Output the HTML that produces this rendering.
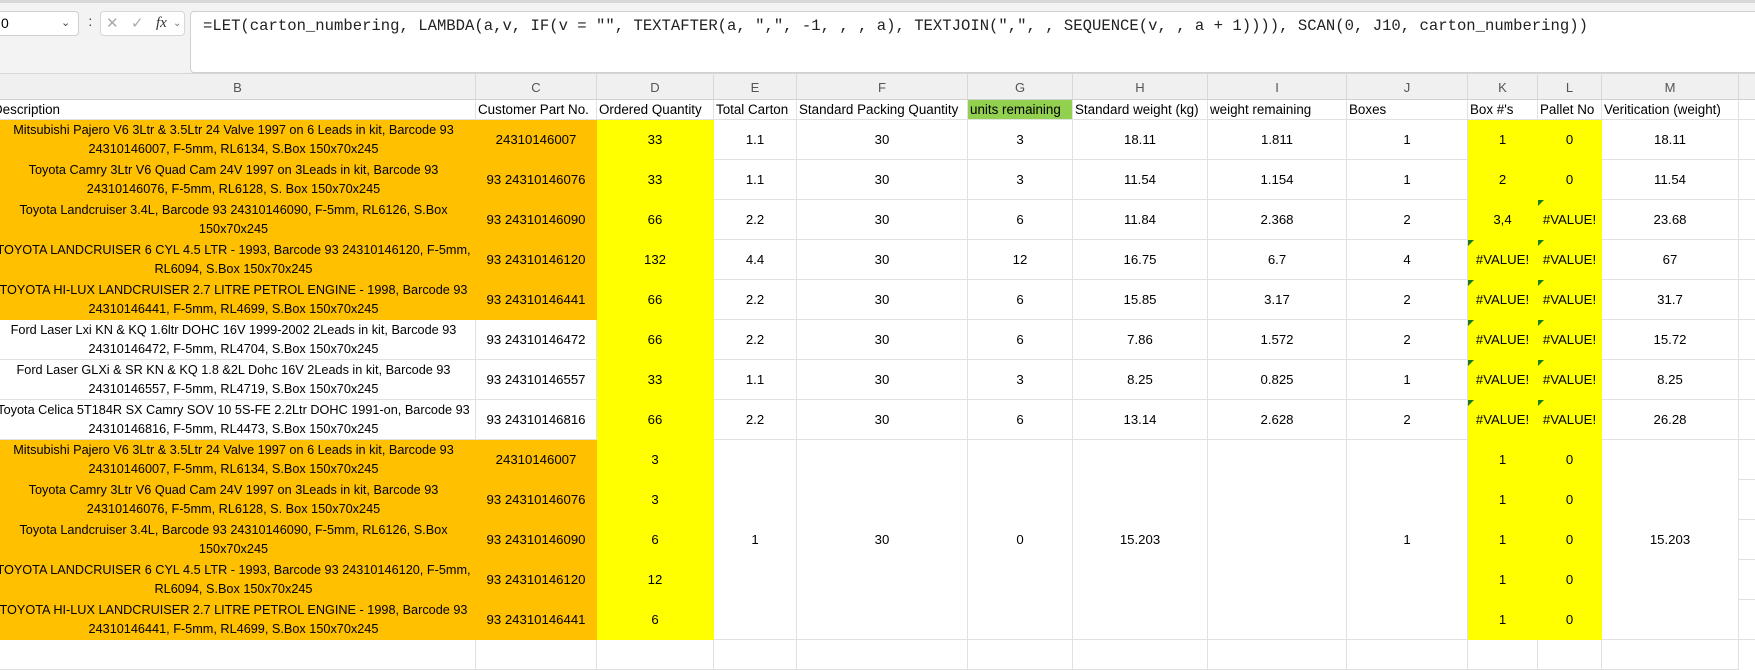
<!DOCTYPE html>
<html><head><meta charset="utf-8"><style>
*{box-sizing:border-box;margin:0;padding:0}
body{width:1755px;height:654px;overflow:hidden;background:#fff;font-family:"Liberation Sans",sans-serif;position:relative}
.top{position:absolute;left:0;top:0;width:1755px;height:73px;background:#f3f3f3;border-top:3px solid #d8d8d8}
.nb{position:absolute;left:-6px;top:8px;width:85px;height:25px;background:#fff;border:1px solid #cfcfcf;border-radius:4px;font-size:14px;line-height:23px;padding-left:6px}
.fxb{position:absolute;left:100px;top:8px;width:85px;height:25px;background:#fff;border:1px solid #d6d6d6;border-radius:4px;color:#aaa;font-size:15px;line-height:23px}
.fb{position:absolute;left:190px;top:8px;width:1580px;height:62px;background:#fff;border:1px solid #d0d0d0;border-radius:4px;font-family:"Liberation Mono",monospace;font-size:15.6px;padding:5px 0 0 12px;color:#222;white-space:pre}
.ch{position:absolute;top:73px;height:27px;background:#f0f0f0;border-bottom:1px solid #d0d0d0;border-top:1px solid #d6d6d6;border-right:1px solid #d8d8d8;color:#555;font-size:13px;text-align:center;line-height:27px}
.c{position:absolute;border-right:1px solid #e1e1e1;border-bottom:1px solid #e1e1e1;font-size:13.2px;color:#000;display:flex;align-items:center;justify-content:center;text-align:center;line-height:19px;white-space:nowrap;overflow:hidden}
.d{font-size:12.7px}
.h{justify-content:flex-start;padding-left:2px;font-size:13.4px}
.o{background:#ffc000;border-color:#ffc000}
.y{background:#ffff00;border-color:#ffff00}
.g{background:#92d050}
.t::before{content:"";position:absolute;left:0;top:0;border-top:6px solid #1a7d1a;border-right:6px solid transparent}
</style></head><body>
<div class="top">
<div class="nb">0<span style="position:absolute;left:66px;top:0;font-size:11px;color:#444">&#8964;</span></div>
<div style="position:absolute;left:88px;top:12px;width:3px;font-size:14px;color:#444;line-height:6px">·<br>·</div>
<div class="fxb"><span style="position:absolute;left:5px">✕</span><span style="position:absolute;left:30px">✓</span><span style="position:absolute;left:55px;color:#333;font-family:'Liberation Serif',serif;font-style:italic">fx</span><span style="position:absolute;left:72px;font-size:10px;color:#777">&#8964;</span></div>
<div class="fb">=LET(carton_numbering, LAMBDA(a,v, IF(v = "", TEXTAFTER(a, ",", -1, , , a), TEXTJOIN(",", , SEQUENCE(v, , a + 1)))), SCAN(0, J10, carton_numbering))</div>
</div>
<div class="ch" style="left:0;width:476px">B</div>
<div class="ch" style="left:476px;width:121px">C</div>
<div class="ch" style="left:597px;width:117px">D</div>
<div class="ch" style="left:714px;width:83px">E</div>
<div class="ch" style="left:797px;width:171px">F</div>
<div class="ch" style="left:968px;width:105px">G</div>
<div class="ch" style="left:1073px;width:135px">H</div>
<div class="ch" style="left:1208px;width:139px">I</div>
<div class="ch" style="left:1347px;width:121px">J</div>
<div class="ch" style="left:1468px;width:70px">K</div>
<div class="ch" style="left:1538px;width:64px">L</div>
<div class="ch" style="left:1602px;width:137px">M</div>
<div class="ch" style="left:1739px;width:30px"></div>

<div class="c h" style="left:-9px;top:100px;width:485px;height:20px">Description</div>
<div class="c h" style="left:476px;top:100px;width:121px;height:20px">Customer Part No.</div>
<div class="c h" style="left:597px;top:100px;width:117px;height:20px">Ordered Quantity</div>
<div class="c h" style="left:714px;top:100px;width:83px;height:20px">Total Carton</div>
<div class="c h" style="left:797px;top:100px;width:171px;height:20px">Standard Packing Quantity</div>
<div class="c h g" style="left:968px;top:100px;width:105px;height:20px">units remaining</div>
<div class="c h" style="left:1073px;top:100px;width:135px;height:20px">Standard weight (kg)</div>
<div class="c h" style="left:1208px;top:100px;width:139px;height:20px">weight remaining</div>
<div class="c h" style="left:1347px;top:100px;width:121px;height:20px">Boxes</div>
<div class="c h" style="left:1468px;top:100px;width:70px;height:20px">Box #'s</div>
<div class="c h" style="left:1538px;top:100px;width:64px;height:20px">Pallet No</div>
<div class="c h" style="left:1602px;top:100px;width:137px;height:20px">Veritication (weight)</div>
<div class="c" style="left:1739px;top:100px;width:30px;height:20px"></div>

<div class="c o d" style="left:-8px;top:120px;width:484px;height:40px">Mitsubishi Pajero V6 3Ltr &amp; 3.5Ltr 24 Valve 1997 on 6 Leads in kit, Barcode 93<br>24310146007, F-5mm, RL6134, S.Box 150x70x245</div>
<div class="c o" style="left:476px;top:120px;width:121px;height:40px">24310146007</div>
<div class="c y" style="left:597px;top:120px;width:117px;height:40px">33</div>
<div class="c" style="left:714px;top:120px;width:83px;height:40px">1.1</div>
<div class="c" style="left:797px;top:120px;width:171px;height:40px">30</div>
<div class="c" style="left:968px;top:120px;width:105px;height:40px">3</div>
<div class="c" style="left:1073px;top:120px;width:135px;height:40px">18.11</div>
<div class="c" style="left:1208px;top:120px;width:139px;height:40px">1.811</div>
<div class="c" style="left:1347px;top:120px;width:121px;height:40px">1</div>
<div class="c y" style="left:1468px;top:120px;width:70px;height:40px">1</div>
<div class="c y" style="left:1538px;top:120px;width:64px;height:40px">0</div>
<div class="c" style="left:1602px;top:120px;width:137px;height:40px">18.11</div>
<div class="c" style="left:1739px;top:120px;width:30px;height:40px"></div>

<div class="c o d" style="left:-8px;top:160px;width:484px;height:40px">Toyota Camry 3Ltr V6 Quad Cam 24V 1997 on 3Leads in kit, Barcode 93<br>24310146076, F-5mm, RL6128, S. Box 150x70x245</div>
<div class="c o" style="left:476px;top:160px;width:121px;height:40px">93 24310146076</div>
<div class="c y" style="left:597px;top:160px;width:117px;height:40px">33</div>
<div class="c" style="left:714px;top:160px;width:83px;height:40px">1.1</div>
<div class="c" style="left:797px;top:160px;width:171px;height:40px">30</div>
<div class="c" style="left:968px;top:160px;width:105px;height:40px">3</div>
<div class="c" style="left:1073px;top:160px;width:135px;height:40px">11.54</div>
<div class="c" style="left:1208px;top:160px;width:139px;height:40px">1.154</div>
<div class="c" style="left:1347px;top:160px;width:121px;height:40px">1</div>
<div class="c y" style="left:1468px;top:160px;width:70px;height:40px">2</div>
<div class="c y" style="left:1538px;top:160px;width:64px;height:40px">0</div>
<div class="c" style="left:1602px;top:160px;width:137px;height:40px">11.54</div>
<div class="c" style="left:1739px;top:160px;width:30px;height:40px"></div>

<div class="c o d" style="left:-8px;top:200px;width:484px;height:40px">Toyota Landcruiser 3.4L, Barcode 93 24310146090, F-5mm, RL6126, S.Box<br>150x70x245</div>
<div class="c o" style="left:476px;top:200px;width:121px;height:40px">93 24310146090</div>
<div class="c y" style="left:597px;top:200px;width:117px;height:40px">66</div>
<div class="c" style="left:714px;top:200px;width:83px;height:40px">2.2</div>
<div class="c" style="left:797px;top:200px;width:171px;height:40px">30</div>
<div class="c" style="left:968px;top:200px;width:105px;height:40px">6</div>
<div class="c" style="left:1073px;top:200px;width:135px;height:40px">11.84</div>
<div class="c" style="left:1208px;top:200px;width:139px;height:40px">2.368</div>
<div class="c" style="left:1347px;top:200px;width:121px;height:40px">2</div>
<div class="c y" style="left:1468px;top:200px;width:70px;height:40px">3,4</div>
<div class="c y t" style="left:1538px;top:200px;width:64px;height:40px">#VALUE!</div>
<div class="c" style="left:1602px;top:200px;width:137px;height:40px">23.68</div>
<div class="c" style="left:1739px;top:200px;width:30px;height:40px"></div>

<div class="c o d" style="left:-8px;top:240px;width:484px;height:40px">TOYOTA LANDCRUISER 6 CYL 4.5 LTR - 1993, Barcode 93 24310146120, F-5mm,<br>RL6094, S.Box 150x70x245</div>
<div class="c o" style="left:476px;top:240px;width:121px;height:40px">93 24310146120</div>
<div class="c y" style="left:597px;top:240px;width:117px;height:40px">132</div>
<div class="c" style="left:714px;top:240px;width:83px;height:40px">4.4</div>
<div class="c" style="left:797px;top:240px;width:171px;height:40px">30</div>
<div class="c" style="left:968px;top:240px;width:105px;height:40px">12</div>
<div class="c" style="left:1073px;top:240px;width:135px;height:40px">16.75</div>
<div class="c" style="left:1208px;top:240px;width:139px;height:40px">6.7</div>
<div class="c" style="left:1347px;top:240px;width:121px;height:40px">4</div>
<div class="c y t" style="left:1468px;top:240px;width:70px;height:40px">#VALUE!</div>
<div class="c y t" style="left:1538px;top:240px;width:64px;height:40px">#VALUE!</div>
<div class="c" style="left:1602px;top:240px;width:137px;height:40px">67</div>
<div class="c" style="left:1739px;top:240px;width:30px;height:40px"></div>

<div class="c o d" style="left:-8px;top:280px;width:484px;height:40px">TOYOTA HI-LUX LANDCRUISER 2.7 LITRE PETROL ENGINE - 1998, Barcode 93<br>24310146441, F-5mm, RL4699, S.Box 150x70x245</div>
<div class="c o" style="left:476px;top:280px;width:121px;height:40px">93 24310146441</div>
<div class="c y" style="left:597px;top:280px;width:117px;height:40px">66</div>
<div class="c" style="left:714px;top:280px;width:83px;height:40px">2.2</div>
<div class="c" style="left:797px;top:280px;width:171px;height:40px">30</div>
<div class="c" style="left:968px;top:280px;width:105px;height:40px">6</div>
<div class="c" style="left:1073px;top:280px;width:135px;height:40px">15.85</div>
<div class="c" style="left:1208px;top:280px;width:139px;height:40px">3.17</div>
<div class="c" style="left:1347px;top:280px;width:121px;height:40px">2</div>
<div class="c y t" style="left:1468px;top:280px;width:70px;height:40px">#VALUE!</div>
<div class="c y t" style="left:1538px;top:280px;width:64px;height:40px">#VALUE!</div>
<div class="c" style="left:1602px;top:280px;width:137px;height:40px">31.7</div>
<div class="c" style="left:1739px;top:280px;width:30px;height:40px"></div>

<div class="c d" style="left:-8px;top:320px;width:484px;height:40px">Ford Laser Lxi KN &amp; KQ 1.6ltr DOHC 16V 1999-2002 2Leads in kit, Barcode 93<br>24310146472, F-5mm, RL4704, S.Box 150x70x245</div>
<div class="c" style="left:476px;top:320px;width:121px;height:40px">93 24310146472</div>
<div class="c y" style="left:597px;top:320px;width:117px;height:40px">66</div>
<div class="c" style="left:714px;top:320px;width:83px;height:40px">2.2</div>
<div class="c" style="left:797px;top:320px;width:171px;height:40px">30</div>
<div class="c" style="left:968px;top:320px;width:105px;height:40px">6</div>
<div class="c" style="left:1073px;top:320px;width:135px;height:40px">7.86</div>
<div class="c" style="left:1208px;top:320px;width:139px;height:40px">1.572</div>
<div class="c" style="left:1347px;top:320px;width:121px;height:40px">2</div>
<div class="c y t" style="left:1468px;top:320px;width:70px;height:40px">#VALUE!</div>
<div class="c y t" style="left:1538px;top:320px;width:64px;height:40px">#VALUE!</div>
<div class="c" style="left:1602px;top:320px;width:137px;height:40px">15.72</div>
<div class="c" style="left:1739px;top:320px;width:30px;height:40px"></div>

<div class="c d" style="left:-8px;top:360px;width:484px;height:40px">Ford Laser GLXi &amp; SR KN &amp; KQ 1.8 &amp;2L Dohc 16V 2Leads in kit, Barcode 93<br>24310146557, F-5mm, RL4719, S.Box 150x70x245</div>
<div class="c" style="left:476px;top:360px;width:121px;height:40px">93 24310146557</div>
<div class="c y" style="left:597px;top:360px;width:117px;height:40px">33</div>
<div class="c" style="left:714px;top:360px;width:83px;height:40px">1.1</div>
<div class="c" style="left:797px;top:360px;width:171px;height:40px">30</div>
<div class="c" style="left:968px;top:360px;width:105px;height:40px">3</div>
<div class="c" style="left:1073px;top:360px;width:135px;height:40px">8.25</div>
<div class="c" style="left:1208px;top:360px;width:139px;height:40px">0.825</div>
<div class="c" style="left:1347px;top:360px;width:121px;height:40px">1</div>
<div class="c y t" style="left:1468px;top:360px;width:70px;height:40px">#VALUE!</div>
<div class="c y t" style="left:1538px;top:360px;width:64px;height:40px">#VALUE!</div>
<div class="c" style="left:1602px;top:360px;width:137px;height:40px">8.25</div>
<div class="c" style="left:1739px;top:360px;width:30px;height:40px"></div>

<div class="c d" style="left:-8px;top:400px;width:484px;height:40px">Toyota Celica 5T184R SX Camry SOV 10 5S-FE 2.2Ltr DOHC 1991-on, Barcode 93<br>24310146816, F-5mm, RL4473, S.Box 150x70x245</div>
<div class="c" style="left:476px;top:400px;width:121px;height:40px">93 24310146816</div>
<div class="c y" style="left:597px;top:400px;width:117px;height:40px">66</div>
<div class="c" style="left:714px;top:400px;width:83px;height:40px">2.2</div>
<div class="c" style="left:797px;top:400px;width:171px;height:40px">30</div>
<div class="c" style="left:968px;top:400px;width:105px;height:40px">6</div>
<div class="c" style="left:1073px;top:400px;width:135px;height:40px">13.14</div>
<div class="c" style="left:1208px;top:400px;width:139px;height:40px">2.628</div>
<div class="c" style="left:1347px;top:400px;width:121px;height:40px">2</div>
<div class="c y t" style="left:1468px;top:400px;width:70px;height:40px">#VALUE!</div>
<div class="c y t" style="left:1538px;top:400px;width:64px;height:40px">#VALUE!</div>
<div class="c" style="left:1602px;top:400px;width:137px;height:40px">26.28</div>
<div class="c" style="left:1739px;top:400px;width:30px;height:40px"></div>

<div class="c o d" style="left:-8px;top:440px;width:484px;height:40px">Mitsubishi Pajero V6 3Ltr &amp; 3.5Ltr 24 Valve 1997 on 6 Leads in kit, Barcode 93<br>24310146007, F-5mm, RL6134, S.Box 150x70x245</div>
<div class="c o" style="left:476px;top:440px;width:121px;height:40px">24310146007</div>
<div class="c y" style="left:597px;top:440px;width:117px;height:40px">3</div>
<div class="c o d" style="left:-8px;top:480px;width:484px;height:40px">Toyota Camry 3Ltr V6 Quad Cam 24V 1997 on 3Leads in kit, Barcode 93<br>24310146076, F-5mm, RL6128, S. Box 150x70x245</div>
<div class="c o" style="left:476px;top:480px;width:121px;height:40px">93 24310146076</div>
<div class="c y" style="left:597px;top:480px;width:117px;height:40px">3</div>
<div class="c o d" style="left:-8px;top:520px;width:484px;height:40px">Toyota Landcruiser 3.4L, Barcode 93 24310146090, F-5mm, RL6126, S.Box<br>150x70x245</div>
<div class="c o" style="left:476px;top:520px;width:121px;height:40px">93 24310146090</div>
<div class="c y" style="left:597px;top:520px;width:117px;height:40px">6</div>
<div class="c o d" style="left:-8px;top:560px;width:484px;height:40px">TOYOTA LANDCRUISER 6 CYL 4.5 LTR - 1993, Barcode 93 24310146120, F-5mm,<br>RL6094, S.Box 150x70x245</div>
<div class="c o" style="left:476px;top:560px;width:121px;height:40px">93 24310146120</div>
<div class="c y" style="left:597px;top:560px;width:117px;height:40px">12</div>
<div class="c o d" style="left:-8px;top:600px;width:484px;height:40px">TOYOTA HI-LUX LANDCRUISER 2.7 LITRE PETROL ENGINE - 1998, Barcode 93<br>24310146441, F-5mm, RL4699, S.Box 150x70x245</div>
<div class="c o" style="left:476px;top:600px;width:121px;height:40px">93 24310146441</div>
<div class="c y" style="left:597px;top:600px;width:117px;height:40px">6</div>

<div class="c" style="left:714px;top:440px;width:83px;height:200px">1</div>
<div class="c" style="left:797px;top:440px;width:171px;height:200px">30</div>
<div class="c" style="left:968px;top:440px;width:105px;height:200px">0</div>
<div class="c" style="left:1073px;top:440px;width:135px;height:200px">15.203</div>
<div class="c" style="left:1208px;top:440px;width:139px;height:200px"></div>
<div class="c" style="left:1347px;top:440px;width:121px;height:200px">1</div>
<div class="c y" style="left:1468px;top:440px;width:70px;height:40px">1</div>
<div class="c y" style="left:1538px;top:440px;width:64px;height:40px">0</div>
<div class="c y" style="left:1468px;top:480px;width:70px;height:40px">1</div>
<div class="c y" style="left:1538px;top:480px;width:64px;height:40px">0</div>
<div class="c y" style="left:1468px;top:520px;width:70px;height:40px">1</div>
<div class="c y" style="left:1538px;top:520px;width:64px;height:40px">0</div>
<div class="c y" style="left:1468px;top:560px;width:70px;height:40px">1</div>
<div class="c y" style="left:1538px;top:560px;width:64px;height:40px">0</div>
<div class="c y" style="left:1468px;top:600px;width:70px;height:40px">1</div>
<div class="c y" style="left:1538px;top:600px;width:64px;height:40px">0</div>
<div class="c" style="left:1602px;top:440px;width:137px;height:200px">15.203</div>
<div class="c" style="left:1739px;top:440px;width:30px;height:40px"></div>
<div class="c" style="left:1739px;top:480px;width:30px;height:40px"></div>
<div class="c" style="left:1739px;top:520px;width:30px;height:40px"></div>
<div class="c" style="left:1739px;top:560px;width:30px;height:40px"></div>
<div class="c" style="left:1739px;top:600px;width:30px;height:40px"></div>

<div class="c" style="left:-12px;top:640px;width:488px;height:30px"></div>
<div class="c" style="left:476px;top:640px;width:121px;height:30px"></div>
<div class="c" style="left:597px;top:640px;width:117px;height:30px"></div>
<div class="c" style="left:714px;top:640px;width:83px;height:30px"></div>
<div class="c" style="left:797px;top:640px;width:171px;height:30px"></div>
<div class="c" style="left:968px;top:640px;width:105px;height:30px"></div>
<div class="c" style="left:1073px;top:640px;width:135px;height:30px"></div>
<div class="c" style="left:1208px;top:640px;width:139px;height:30px"></div>
<div class="c" style="left:1347px;top:640px;width:121px;height:30px"></div>
<div class="c" style="left:1468px;top:640px;width:70px;height:30px"></div>
<div class="c" style="left:1538px;top:640px;width:64px;height:30px"></div>
<div class="c" style="left:1602px;top:640px;width:137px;height:30px"></div>
</body></html>
